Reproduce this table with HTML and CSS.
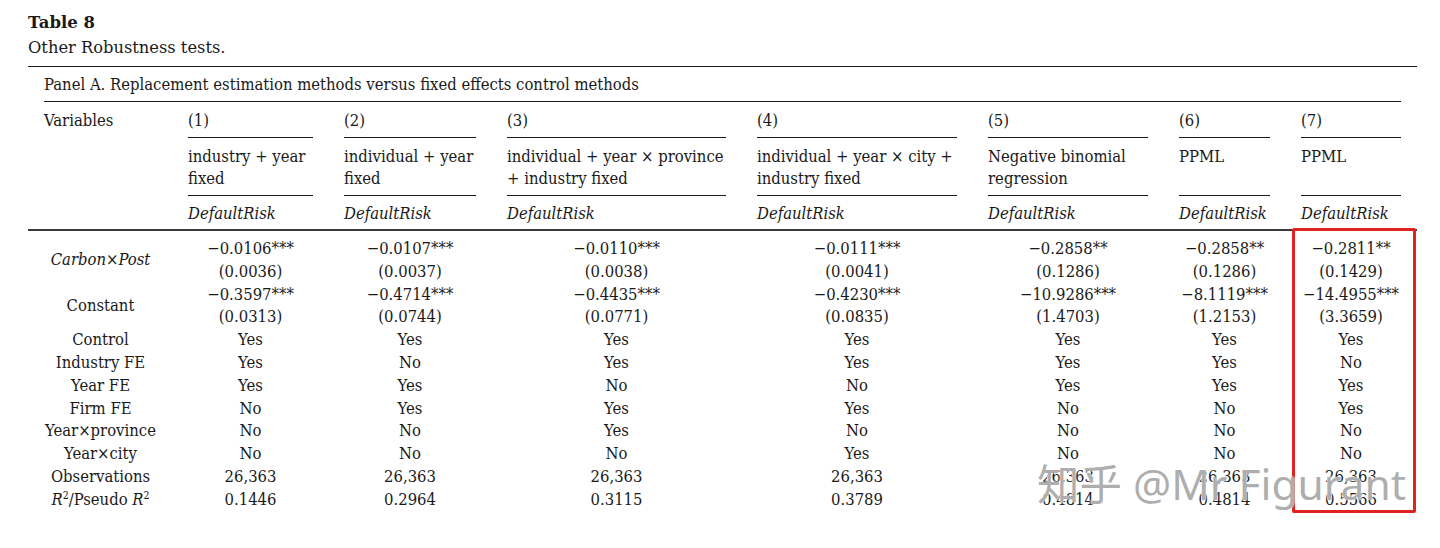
FILE: index.html
```html
<!DOCTYPE html>
<html lang="en">
<head>
<meta charset="utf-8">
<title>Table 8</title>
<link rel="stylesheet" href="styles.css">
</head>
<body>
<div class="page">
  <div class="caption">
    <div class="cap-label">Table 8</div>
    <div class="cap-title">Other Robustness tests.</div>
  </div>
  <div class="table">
    <div class="panel">
      <div class="panel-title">Panel A. Replacement estimation methods versus fixed effects control methods</div>
    </div>
    <div class="head">
      <div class="h h-var">Variables</div>
      <div class="h h-num">(1)</div>
      <div class="h h-num">(2)</div>
      <div class="h h-num">(3)</div>
      <div class="h h-num">(4)</div>
      <div class="h h-num">(5)</div>
      <div class="h h-num">(6)</div>
      <div class="h h-num">(7)</div>
      <div class="h h-blank"></div>
      <div class="h h-desc">industry + year<br>fixed</div>
      <div class="h h-desc">individual + year<br>fixed</div>
      <div class="h h-desc">individual + year × province<br>+ industry fixed</div>
      <div class="h h-desc">individual + year × city +<br>industry fixed</div>
      <div class="h h-desc">Negative binomial<br>regression</div>
      <div class="h h-desc">PPML</div>
      <div class="h h-desc">PPML</div>
      <div class="h h-blank"></div>
      <div class="h h-dep"><i>DefaultRisk</i></div>
      <div class="h h-dep"><i>DefaultRisk</i></div>
      <div class="h h-dep"><i>DefaultRisk</i></div>
      <div class="h h-dep"><i>DefaultRisk</i></div>
      <div class="h h-dep"><i>DefaultRisk</i></div>
      <div class="h h-dep"><i>DefaultRisk</i></div>
      <div class="h h-dep"><i>DefaultRisk</i></div>
    </div>
    <div class="body">
      <div class="c lab span2"><span><i>Carbon</i>×<i>Post</i></span></div>
      <div class="c">−0.0106***</div>
      <div class="c">−0.0107***</div>
      <div class="c">−0.0110***</div>
      <div class="c">−0.0111***</div>
      <div class="c">−0.2858**</div>
      <div class="c">−0.2858**</div>
      <div class="c">−0.2811**</div>
      <div class="c">(0.0036)</div>
      <div class="c">(0.0037)</div>
      <div class="c">(0.0038)</div>
      <div class="c">(0.0041)</div>
      <div class="c">(0.1286)</div>
      <div class="c">(0.1286)</div>
      <div class="c">(0.1429)</div>

      <div class="c lab span2"><span>Constant</span></div>
      <div class="c">−0.3597***</div>
      <div class="c">−0.4714***</div>
      <div class="c">−0.4435***</div>
      <div class="c">−0.4230***</div>
      <div class="c">−10.9286***</div>
      <div class="c">−8.1119***</div>
      <div class="c">−14.4955***</div>
      <div class="c">(0.0313)</div>
      <div class="c">(0.0744)</div>
      <div class="c">(0.0771)</div>
      <div class="c">(0.0835)</div>
      <div class="c">(1.4703)</div>
      <div class="c">(1.2153)</div>
      <div class="c">(3.3659)</div>

      <div class="c lab"><span>Control</span></div>
      <div class="c">Yes</div><div class="c">Yes</div><div class="c">Yes</div><div class="c">Yes</div><div class="c">Yes</div><div class="c">Yes</div><div class="c">Yes</div>

      <div class="c lab"><span>Industry FE</span></div>
      <div class="c">Yes</div><div class="c">No</div><div class="c">Yes</div><div class="c">Yes</div><div class="c">Yes</div><div class="c">Yes</div><div class="c">No</div>

      <div class="c lab"><span>Year FE</span></div>
      <div class="c">Yes</div><div class="c">Yes</div><div class="c">No</div><div class="c">No</div><div class="c">Yes</div><div class="c">Yes</div><div class="c">Yes</div>

      <div class="c lab"><span>Firm FE</span></div>
      <div class="c">No</div><div class="c">Yes</div><div class="c">Yes</div><div class="c">Yes</div><div class="c">No</div><div class="c">No</div><div class="c">Yes</div>

      <div class="c lab"><span>Year×province</span></div>
      <div class="c">No</div><div class="c">No</div><div class="c">Yes</div><div class="c">No</div><div class="c">No</div><div class="c">No</div><div class="c">No</div>

      <div class="c lab"><span>Year×city</span></div>
      <div class="c">No</div><div class="c">No</div><div class="c">No</div><div class="c">Yes</div><div class="c">No</div><div class="c">No</div><div class="c">No</div>

      <div class="c lab"><span>Observations</span></div>
      <div class="c">26,363</div><div class="c">26,363</div><div class="c">26,363</div><div class="c">26,363</div><div class="c">26,363</div><div class="c">26,363</div><div class="c">26,363</div>

      <div class="c lab"><span><i>R</i><sup>2</sup>/Pseudo <i>R</i><sup>2</sup></span></div>
      <div class="c">0.1446</div><div class="c">0.2964</div><div class="c">0.3115</div><div class="c">0.3789</div><div class="c">0.4814</div><div class="c">0.4814</div><div class="c">0.5566</div>

      <div class="highlight"></div>
      <div class="watermark">知乎 @Mr Figurant</div>
    </div>
  </div>
</div>
</body>
</html>
```

FILE: styles.css
```css
* { box-sizing: border-box; }

html, body {
  margin: 0;
  background: #ffffff;
}

body {
  font-family: "DejaVu Serif", "Liberation Serif", serif;
  font-size: 16px;
  color: #1a1a1a;
  width: 1440px;
  height: 548px;
  overflow: hidden;
}

.page {
  padding: 10px 23px 0 28px;
}

.caption {
  line-height: 25px;
}

.cap-label {
  font-weight: bold;
  font-size: 16.5px;
}

.cap-title {
  font-size: 16.3px;
}

.table {
  margin-top: 6px;
  width: 1389px;
  border-top: 1px solid #1a1a1a;
  font-family: "DejaVu Serif Condensed", "DejaVu Serif", serif;
  font-stretch: semi-condensed;
  font-size: 16.5px;
}

.panel {
  padding-left: 16px;
  padding-right: 16px;
}

.panel-title {
  line-height: 22px;
  padding: 7px 0 5px;
  border-bottom: 1px solid #1a1a1a;
}

.head,
.body {
  display: grid;
  grid-template-columns: 113px 125px 132px 219px 200px 160px 91px 100px;
  column-gap: 31px;
  padding-left: 16px;
}

.head {
  line-height: 22px;
  white-space: nowrap;
}

.h {
  padding: 8px 0 5px;
}

.h-num,
.h-desc {
  border-bottom: 1px solid #1a1a1a;
}

.h-num {
  padding: 8px 0 5px;
}

.h-desc {
  padding: 8px 0 5px;
}

.h-dep {
  padding: 7px 0 4px;
}

.body {
  position: relative;
  border-top: 2px solid #3a3a3a;
  padding-top: 7px;
  line-height: 22.8px;
}

.c {
  text-align: center;
  white-space: nowrap;
}

.lab {
  display: flex;
  align-items: center;
  justify-content: center;
}

.span2 {
  grid-row: span 2;
}

sup {
  font-size: 10.5px;
  line-height: 0;
  vertical-align: 6px;
}

.highlight {
  position: absolute;
  left: 1264px;
  top: -3px;
  width: 124px;
  height: 285px;
  border: 3px solid #e0231c;
  border-radius: 2px;
  pointer-events: none;
}

.watermark {
  position: absolute;
  left: 1009px;
  top: 228px;
  font-family: "Noto Sans", "Noto Sans CJK SC", sans-serif;
  font-stretch: normal;
  font-size: 42.5px;
  line-height: 50px;
  color: rgba(160, 160, 160, 0.85);
  text-shadow: 0 0 2px #ffffff, 0 0 1px #ffffff;
  white-space: nowrap;
  pointer-events: none;
}
```
